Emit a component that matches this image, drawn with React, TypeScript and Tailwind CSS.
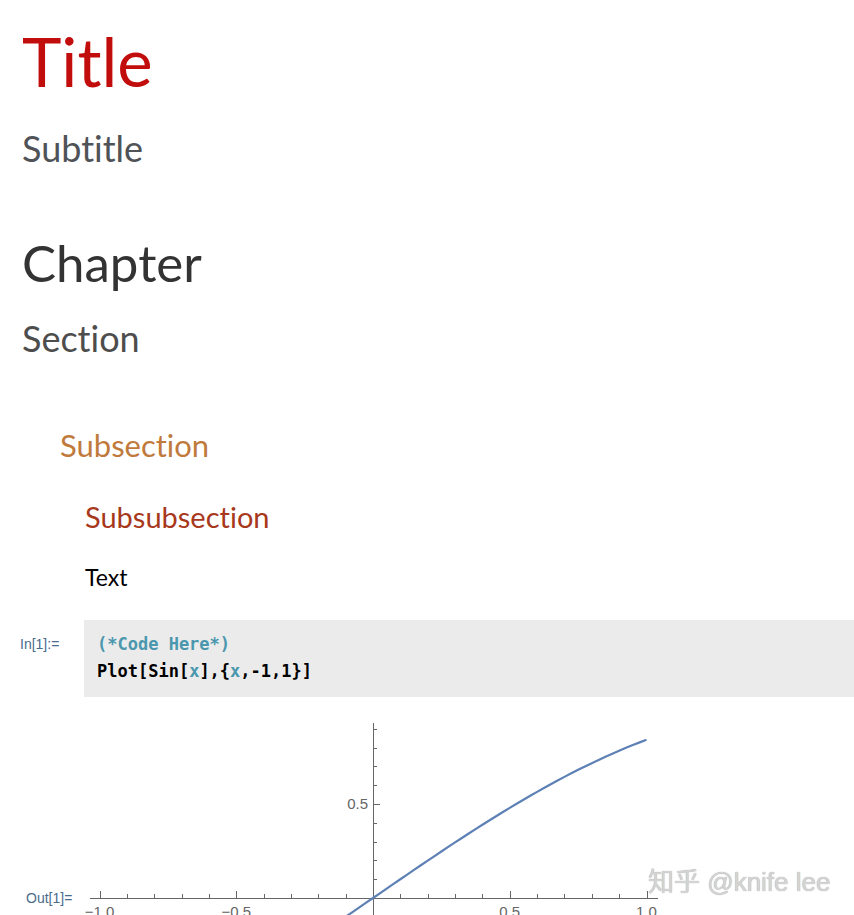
const OX = 293;
const OY = 183;
const SX = 273.5;
const SY = 188;

function sinPath() {
  const pts: string[] = [];
  for (let i = 0; i <= 80; i++) {
    const x = -1 + (2 * i) / 80;
    const px = OX + x * SX;
    const py = OY - Math.sin(x) * SY;
    pts.push(`${i === 0 ? 'M' : 'L'}${px.toFixed(2)},${py.toFixed(2)}`);
  }
  return pts.join(' ');
}

function Plot() {
  const xTicks: number[] = [];
  for (let i = -10; i <= 10; i++) if (i !== 0) xTicks.push(i / 10);
  const yTicks: number[] = [];
  for (let i = -9; i <= 9; i++) if (i !== 0) yTicks.push(i / 10);
  const isMajor = (v: number) => Math.abs(Math.abs(v) - 0.5) < 1e-6 || Math.abs(Math.abs(v) - 1) < 1e-6;

  return (
    <svg width="600" height="230" viewBox="0 0 600 230" className="block">
      <g stroke="#666" strokeWidth="1" shapeRendering="crispEdges">
        <line x1="10" y1={OY} x2="578" y2={OY} />
        <line x1={OX} y1="8" x2={OX} y2="230" />
        {xTicks.map((v) => {
          const x = Math.round(OX + v * SX) + 0.5;
          return <line key={`x${v}`} x1={x} y1={OY} x2={x} y2={OY - (isMajor(v) ? 7 : 4)} />;
        })}
        {yTicks.map((v) => {
          const y = Math.round(OY - v * SY) + 0.5;
          return <line key={`y${v}`} x1={OX} y1={y} x2={OX + (isMajor(v) ? 7 : 4)} y2={y} />;
        })}
      </g>
      <path d={sinPath()} fill="none" stroke="#5e81b5" strokeWidth="2.2" strokeLinejoin="round" />
      <g fill="#666" fontFamily="'Liberation Sans', Arial, sans-serif" fontSize="15">
        <text x={OX - 5} y={OY - 0.5 * SY + 5} textAnchor="end">0.5</text>
        <text x={OX - SX} y={OY + 19} textAnchor="middle">−1.0</text>
        <text x={OX - 0.5 * SX} y={OY + 19} textAnchor="middle">−0.5</text>
        <text x={OX + 0.5 * SX} y={OY + 19} textAnchor="middle">0.5</text>
        <text x={OX + SX} y={OY + 19} textAnchor="middle">1.0</text>
      </g>
    </svg>
  );
}

export default function App() {
  return (
    <div className="relative h-[915px] overflow-hidden bg-white font-['Lato',sans-serif] [font-variant-ligatures:none]">
      <h1 className="pl-[22px] pt-[28px] text-[67px] leading-[67px] text-[#c20d0d]">Title</h1>
      <div className="mt-[35px] pl-[22px] text-[36px] leading-[36px] text-[#4f5357]">Subtitle</div>
      <h2 className="mt-[71px] pl-[22px] text-[51px] leading-[51px] text-[#333333]">Chapter</h2>
      <h3 className="mt-[32px] pl-[22px] text-[36px] leading-[36px] text-[#4d4d4d]">Section</h3>
      <h4 className="mt-[74px] pl-[60px] text-[31px] leading-[31px] text-[#c07a3c]">Subsection</h4>
      <h5 className="mt-[41px] pl-[85px] text-[29px] leading-[29px] text-[#a8381b]">Subsubsection</h5>
      <p className="mt-[35px] pl-[85px] text-[23px] leading-[23px] text-black">Text</p>

      <div className="mt-[31px] flex">
        <div className="w-[84px] shrink-0 pl-[20px] pt-[11px] font-['Liberation_Sans',Arial,sans-serif] text-[14px] leading-[27px] text-[#4a6c8c]">
          In[1]:=
        </div>
        <div className="flex-1 bg-[#ebebeb] pb-[12px] pl-[13px] pt-[11px] font-['DejaVu_Sans_Mono',monospace] text-[17px] font-bold leading-[27px] text-black">
          <div className="text-[#4a97ae]">(*Code Here*)</div>
          <div>
            Plot[Sin[<span className="text-[#4a97ae]">x</span>],{'{'}
            <span className="text-[#4a97ae]">x</span>,-1,1{'}'}]
          </div>
        </div>
      </div>

      <div className="mt-[18px] flex">
        <div className="w-[80px] shrink-0 pl-[26px] pt-[176px] font-['Liberation_Sans',Arial,sans-serif] text-[14px] leading-[14px] text-[#4a6c8c]">
          Out[1]=
        </div>
        <Plot />
      </div>

      <div className="absolute left-[648px] top-[863px] font-['Liberation_Sans','Noto_Sans_CJK_SC',sans-serif] text-[26px] leading-[34px] text-[#d4d4d4] [text-shadow:0_0_1px_#9a9a9a]">
        <span className="font-['Noto_Sans_CJK_SC',sans-serif]">知乎</span> @knife lee
      </div>
    </div>
  );
}
